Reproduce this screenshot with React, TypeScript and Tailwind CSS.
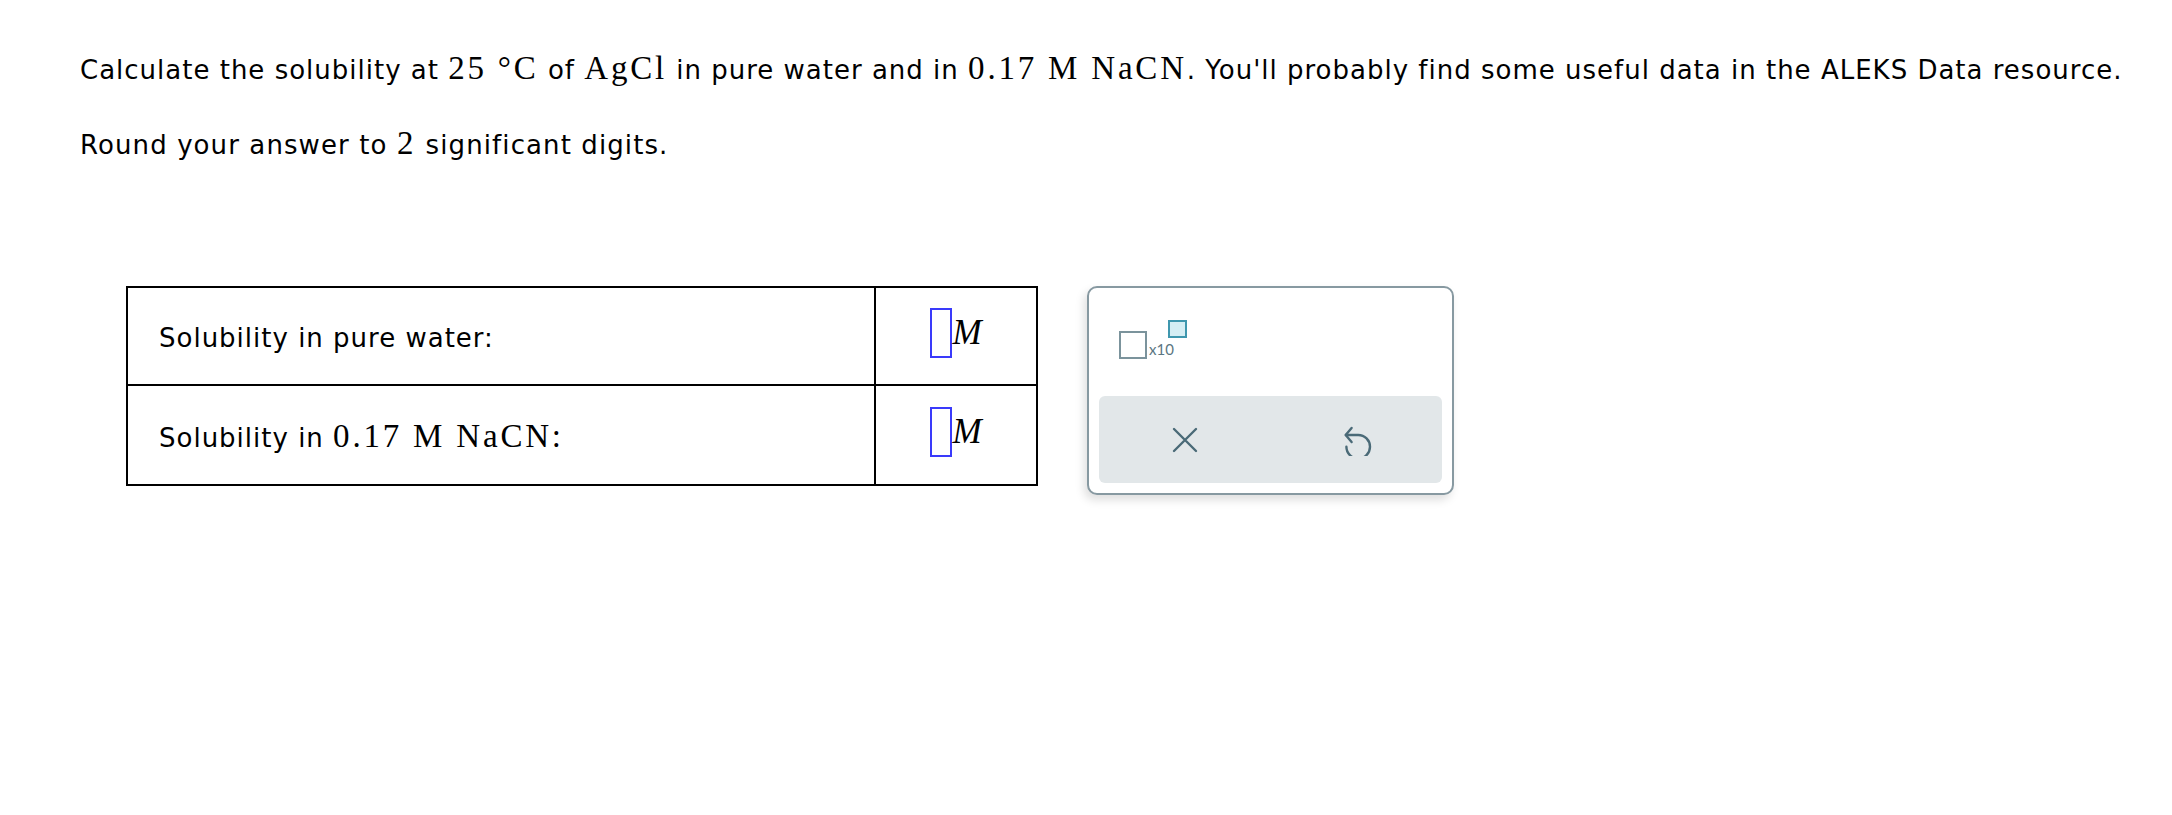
import React from "react";

const Serif = ({ children }: { children: React.ReactNode }) => (
  <span className="font-['Liberation_Serif',serif] text-[33px] tracking-[2.8px]">{children}</span>
);

const AnswerBox = () => (
  <div className="flex items-center pb-[7px]">
    <div className="w-[22px] h-[50px] border-2 border-[#3a3afb]" />
    <span className="font-['Liberation_Serif',serif] italic text-[35px] leading-none">M</span>
  </div>
);

const XIcon = () => (
  <svg width="26" height="26" viewBox="0 0 26 26" fill="none" stroke="#4a6a77" strokeWidth="2.4" strokeLinecap="round">
    <path d="M2 2 L24 24 M24 2 L2 24" />
  </svg>
);

const UndoIcon = () => (
  <svg width="32" height="32" viewBox="0 0 32 32" fill="none" stroke="#4a6a77" strokeWidth="2.4" strokeLinecap="round" strokeLinejoin="round">
    <path d="M6.4 22.8 A11.8 11.8 0 1 0 18.2 11 H5.9" />
    <path d="M11.6 4 L5.7 11 L11.6 18" />
  </svg>
);

export default function App() {
  return (
    <div className="min-h-[815px] w-full bg-white text-black font-['DejaVu_Sans',Verdana,sans-serif] pl-[80px] pt-[50px]">
      <p className="text-[26px] leading-[36px] tracking-[1px] whitespace-nowrap">
        Calculate the solubility at <Serif>25 °C</Serif> of <Serif>AgCl</Serif> in pure water and in{" "}
        <Serif>0.17 M NaCN</Serif>. You'll probably find some useful data in the ALEKS Data resource.
      </p>
      <p className="text-[26px] leading-[36px] tracking-[1.1px] mt-[37px] whitespace-nowrap">
        Round your answer to <Serif>2</Serif> significant digits.
      </p>

      <div className="flex items-start mt-[123px] ml-[46px]">
        <div className="border-2 border-black w-[912px]">
          <div className="flex h-[98px] border-b-2 border-black">
            <div className="w-[748px] border-r-2 border-black flex items-center pl-[31px] pt-[4px] text-[26px] leading-[30px] tracking-[1px]">
              Solubility in pure water:
            </div>
            <div className="flex-1 flex items-center justify-center">
              <AnswerBox />
            </div>
          </div>
          <div className="flex h-[98px]">
            <div className="w-[748px] border-r-2 border-black flex items-center pl-[31px] pt-[4px] text-[26px] leading-[30px] tracking-[1px]">
              <span>
                Solubility in <Serif>0.17 M NaCN:</Serif>
              </span>
            </div>
            <div className="flex-1 flex items-center justify-center">
              <AnswerBox />
            </div>
          </div>
        </div>

        <div className="ml-[49px] w-[367px] h-[209px] border-2 border-[#8799a1] rounded-[10px] bg-white shadow-[-3px_5px_10px_rgba(0,0,0,0.13)] p-[10px] flex flex-col">
          <div className="h-[98px] pl-[20px] pt-[22px]">
            <div className="flex items-end h-[39px]">
              <div className="w-[28px] h-[28px] border-2 border-[#7b939c]" />
              <span className="ml-[2px] mb-[2px] font-['Lato',sans-serif] text-[15px] leading-none text-[#5b7682]">x10</span>
              <div className="self-start ml-[-6px] w-[19px] h-[18px] border-2 border-[#3f97ae] bg-[#d5eef4]" />
            </div>
          </div>
          <div className="flex-1 bg-[#e2e7e9] rounded-[6px] flex">
            <div className="flex-1 flex items-center justify-center">
              <XIcon />
            </div>
            <div className="flex-1 flex items-center justify-center">
              <UndoIcon />
            </div>
          </div>
        </div>
      </div>
    </div>
  );
}
